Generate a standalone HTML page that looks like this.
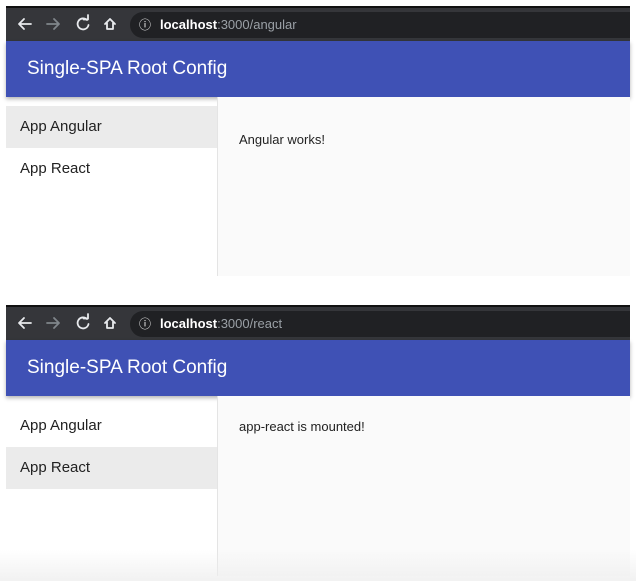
<!DOCTYPE html>
<html><head><style>
*{margin:0;padding:0;box-sizing:border-box}
body{width:636px;height:581px;background:#fff;position:relative;overflow:hidden;font-family:"Liberation Sans",Arial,sans-serif}
.p{position:absolute;left:6px;width:624px}
.bar{position:absolute;left:0;width:624px;height:35px;background:#35363a;border-top:2px solid #111}
.url{position:absolute;left:124px;right:0;top:4px;height:26px;background:#202124;border-radius:13px 0 0 13px;color:#fff;font-size:13px;line-height:26px;padding-left:30px}
.url b{font-weight:bold}.url span{color:#9aa0a6}
.ico{position:absolute;top:0;left:0}
.hdr{position:absolute;left:0;width:624px;height:56px;background:#3f51b5;color:#fff;font-size:19px;line-height:56px;padding-left:21px;box-shadow:0 2px 4px rgba(0,0,0,.3)}
.side{position:absolute;left:0;width:211px;background:#fff}
.main{position:absolute;left:211px;width:413px;background:#fafafa;border-left:1px solid #e4e4e4;font-size:13px;color:#222}
.it{height:42px;line-height:42px;padding-left:14px;font-size:15px;color:#222}
.act{background:#ebebeb}
</style></head><body>
<div class="p" style="top:6px">
 <div class="bar" style="top:0">
  <svg class="ico" width="124" height="33" fill="none" stroke-width="1.8" stroke-linecap="round" stroke-linejoin="round">
   <path d="M13 16h12M18 11l-5 5 5 5" stroke="#e8eaed"/>
   <path d="M41 16h12M48 11l5 5-5 5" stroke="#80868b"/>
   <path d="M81 12a5.5 5.5 0 1 0 1.5 5" stroke="#e8eaed"/><path d="M77.5 11.5h4.5v-4.5" stroke="#e8eaed"/>
   <path d="M99 16l5-5 5 5M101 15v6h6v-6" stroke="#e8eaed"/>
  </svg>
  <div class="url"><span style="position:absolute;left:9px;color:#fff;font-size:12px">ⓘ</span><b>localhost</b><span>:3000/angular</span></div>
 </div>
 <div class="hdr" style="top:35px">Single-SPA Root Config</div>
 <div class="side" style="top:100px;height:170px"><div class="it act">App Angular</div><div class="it">App React</div></div>
 <div class="main" style="top:91px;height:179px;padding:35px 0 0 21px">Angular works!</div>
</div>
<div class="p" style="top:305px">
 <div class="bar" style="top:0">
  <svg class="ico" width="124" height="33" fill="none" stroke-width="1.8" stroke-linecap="round" stroke-linejoin="round">
   <path d="M13 16h12M18 11l-5 5 5 5" stroke="#e8eaed"/>
   <path d="M41 16h12M48 11l5 5-5 5" stroke="#80868b"/>
   <path d="M81 12a5.5 5.5 0 1 0 1.5 5" stroke="#e8eaed"/><path d="M77.5 11.5h4.5v-4.5" stroke="#e8eaed"/>
   <path d="M99 16l5-5 5 5M101 15v6h6v-6" stroke="#e8eaed"/>
  </svg>
  <div class="url"><span style="position:absolute;left:9px;color:#fff;font-size:12px">ⓘ</span><b>localhost</b><span>:3000/react</span></div>
 </div>
 <div class="hdr" style="top:35px">Single-SPA Root Config</div>
 <div class="side" style="top:100px;height:171px"><div class="it">App Angular</div><div class="it act">App React</div></div>
 <div class="main" style="top:91px;height:180px;padding:23px 0 0 21px">app-react is mounted!</div>
</div>
<div style="position:absolute;left:0;top:550px;width:636px;height:31px;background:linear-gradient(rgba(240,240,240,0),rgba(238,238,238,.8))"></div>
</body></html>
